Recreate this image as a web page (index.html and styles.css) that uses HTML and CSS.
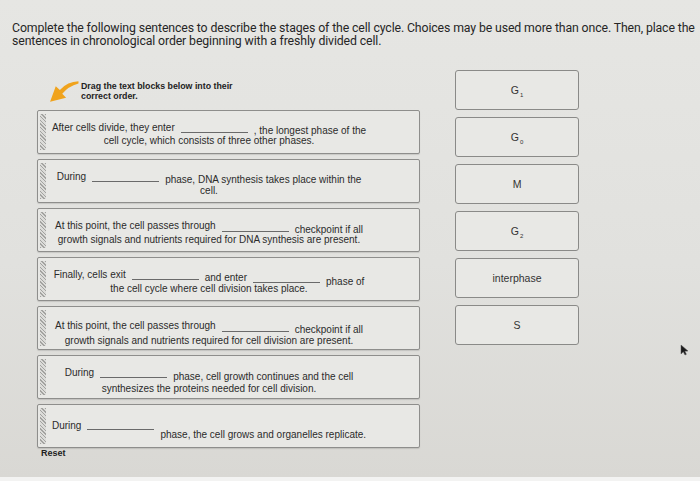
FILE: index.html
```html
<!DOCTYPE html>
<html lang="en">
<head>
<meta charset="utf-8">
<title>Cell cycle ordering</title>
<link rel="stylesheet" href="styles.css">
</head>
<body>
<div class="screen">
  <p class="prompt">Complete the following sentences to describe the stages of the cell cycle. Choices may be used more than once. Then, place the sentences in chronological order beginning with a freshly divided cell.</p>
  <div class="activity">
    <div class="left">
      <div class="hint">
        <svg class="hint-arrow" width="31" height="23" viewBox="0 0 30 22">
          <path d="M29.5 1.2 Q19 1.5 11.5 9.5 L7.5 6 L2 21 L17.5 17 L13.8 13.2 Q19.5 6 29.5 3.2 Z" fill="#f0a31d"/>
        </svg>
        <p class="hint-text">Drag the text blocks below into their<br>correct order.</p>
      </div>
      <div class="cards">
        <div class="card">
          <span class="handle"></span>
          <div class="card-body">
            <div class="line"><span class="seg">After cells divide, they enter</span><span class="blank"></span><span class="seg d3">, the longest phase of the</span></div>
            <div class="line2">cell cycle, which consists of three other phases.</div>
          </div>
        </div>
        <div class="card">
          <span class="handle"></span>
          <div class="card-body">
            <div class="line"><span class="seg">During</span><span class="blank"></span><span class="seg d3">phase, DNA synthesis takes place within the</span></div>
            <div class="line2 m1">cell.</div>
          </div>
        </div>
        <div class="card">
          <span class="handle"></span>
          <div class="card-body">
            <div class="line"><span class="seg">At this point, the cell passes through</span><span class="blank d1"></span><span class="seg d4">checkpoint if all</span></div>
            <div class="line2 m1">growth signals and nutrients required for DNA synthesis are present.</div>
          </div>
        </div>
        <div class="card">
          <span class="handle"></span>
          <div class="card-body">
            <div class="line"><span class="seg">Finally, cells exit</span><span class="blank"></span><span class="seg d3">and enter</span><span class="blank d3"></span><span class="seg d7">phase of</span></div>
            <div class="line2 m1">the cell cycle where cell division takes place.</div>
          </div>
        </div>
        <div class="card">
          <span class="handle"></span>
          <div class="card-body">
            <div class="line"><span class="seg d2">At this point, the cell passes through</span><span class="blank d3"></span><span class="seg d6">checkpoint if all</span></div>
            <div class="line2 m4">growth signals and nutrients required for cell division are present.</div>
          </div>
        </div>
        <div class="card">
          <span class="handle"></span>
          <div class="card-body">
            <div class="line"><span class="seg">During</span><span class="blank"></span><span class="seg d4">phase, cell growth continues and the cell</span></div>
            <div class="line2 m3">synthesizes the proteins needed for cell division.</div>
          </div>
        </div>
        <div class="card">
          <span class="handle"></span>
          <div class="card-body">
            <div class="line"><span class="seg d4">During</span><span class="blank d3"></span><span class="seg d13">phase, the cell grows and organelles replicate.</span></div>
          </div>
        </div>
      </div>
      <div class="reset">Reset</div>
    </div>
    <div class="choices">
      <div class="choice"><span class="label">G<sub>1</sub></span></div>
      <div class="choice"><span class="label">G<sub>0</sub></span></div>
      <div class="choice"><span class="label">M</span></div>
      <div class="choice"><span class="label">G<sub>2</sub></span></div>
      <div class="choice"><span class="label">interphase</span></div>
      <div class="choice"><span class="label">S</span></div>
    </div>
  </div>
</div>
<div class="strip"></div>
<svg class="cursor" width="9" height="12" viewBox="0 0 9 12">
  <path d="M1 1 L1 10 L3.3 7.8 L5 11 L6.4 10.3 L4.8 7.2 L8 7 Z" fill="#1b1b1b" stroke="#555" stroke-width="0.5"/>
</svg>
</body>
</html>
```

FILE: styles.css
```css
html, body {
  margin: 0;
  padding: 0;
}

body {
  width: 700px;
  height: 481px;
  overflow: hidden;
  position: relative;
  font-family: "Liberation Sans", Arial, sans-serif;
  color: #2b2b2b;
  background: #f3f3f2;
}

.screen {
  height: 477px;
  box-sizing: border-box;
  padding: 22px 0 0 12px;
  background: linear-gradient(180deg, #e6e6e3 0%, #e1e1de 55%, #d9d8d4 100%);
}

.prompt {
  margin: 0;
  font-family: Roboto, "Liberation Sans", sans-serif;
  font-size: 12.3px;
  line-height: 13px;
  color: #262626;
  letter-spacing: -0.12px;
}

.activity {
  display: flex;
  align-items: flex-start;
  margin-top: 22px;
  padding-left: 25px;
}

.left {
  width: 383px;
  padding-top: 10px;
}

.hint {
  display: flex;
  align-items: flex-start;
  height: 30px;
}

.hint-arrow {
  margin-left: 11px;
  flex: none;
}

.hint-text {
  margin: 1px 0 0 2px;
  font-size: 8.8px;
  line-height: 10px;
  font-weight: bold;
  color: #222;
}

.cards {
  display: flex;
  flex-direction: column;
  gap: 5px;
}

.card {
  display: flex;
  height: 44px;
  box-sizing: border-box;
  border: 1px solid #8e8e8c;
  border-radius: 2px;
  background: #e8e8e5;
  box-shadow: 0 1px 1px rgba(0, 0, 0, 0.12);
}

.handle {
  flex: none;
  width: 6px;
  margin: 3px 0 3px 2px;
  background:
    repeating-linear-gradient(45deg, #a3a3a0 0 1px, #dcdcd9 1px 2.6px),
    #d4d4d1;
}

.card-body {
  flex: 1;
  padding: 10px 47px 0 0;
  font-size: 10px;
  line-height: 13px;
  text-align: center;
  color: #2b2b2b;
}

.line {
  display: flex;
  justify-content: center;
  align-items: flex-start;
  height: 13px;
  white-space: nowrap;
}

.seg {
  flex: none;
}

.blank {
  flex: none;
  width: 67px;
  height: 11px;
  margin: 0 6px;
  border-bottom: 1px solid #6a6a6a;
}

.d1 { margin-top: 1px; }
.d2 { margin-top: 2px; }
.d3 { margin-top: 3px; }
.d4 { margin-top: 4px; }
.d6 { margin-top: 6px; }
.d7 { margin-top: 7px; }
.d13 { margin-top: 13px; }

.line2 {
  white-space: nowrap;
}

.m1 { margin-top: 1px; }
.m2 { margin-top: 2px; }
.m3 { margin-top: 3px; }
.m4 { margin-top: 4px; }

.reset {
  margin: 0 0 0 4px;
  font-size: 9px;
  line-height: 10px;
  font-weight: bold;
  color: #222;
}

.choices {
  margin-left: 35px;
  display: flex;
  flex-direction: column;
  gap: 7px;
}

.choice {
  width: 124px;
  height: 40px;
  box-sizing: border-box;
  border: 1px solid #8a8a88;
  border-radius: 3px;
  background: #e8e8e5;
  display: flex;
  align-items: center;
  justify-content: center;
  font-size: 10.5px;
  color: #333;
}

.label {
  line-height: 12px;
}

.label sub {
  font-size: 6px;
  line-height: 0;
  vertical-align: -3px;
  margin-left: 1px;
}

.strip {
  height: 4px;
  background: #f3f3f2;
}

.cursor {
  position: absolute;
  left: 680px;
  top: 344px;
}
```
